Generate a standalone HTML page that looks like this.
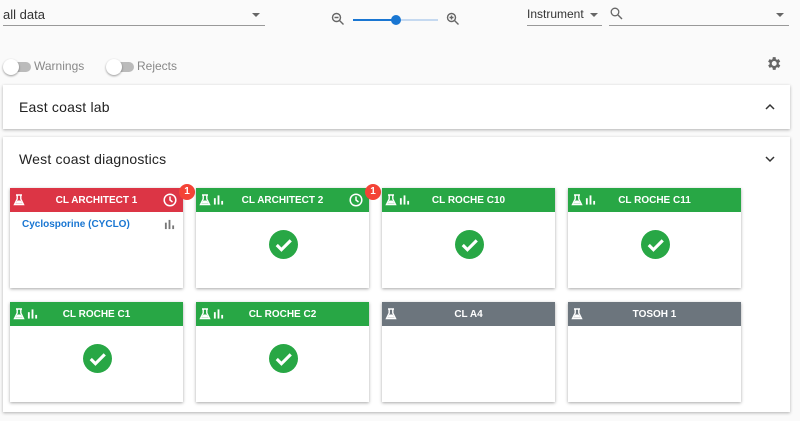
<!DOCTYPE html>
<html><head><style>
*{box-sizing:border-box;margin:0;padding:0}
body{width:800px;height:421px;background:#fafafa;font-family:"Liberation Sans",sans-serif;position:relative;overflow:hidden;color:#333}
.abs{position:absolute}
.sel{border-bottom:1px solid #999;font-size:12px;color:#333;padding-top:2px}
.tri{position:absolute;width:0;height:0;border-left:4px solid transparent;border-right:4px solid transparent;border-top:4px solid #666}
.panel{position:absolute;left:3px;width:787px;background:#fff;box-shadow:0 1px 3px rgba(0,0,0,.3)}
.panel h2{position:absolute;left:16px;font-weight:normal;font-size:14px;color:#222;letter-spacing:.2px}
.card{position:absolute;width:173px;height:100px;background:#fff;box-shadow:0 1px 3px rgba(0,0,0,.35)}
.hd{height:24px;color:#fff;font-weight:bold;font-size:10px;text-align:center;line-height:25px;position:relative}
.red{background:#dc3545}.grn{background:#28a745}.gry{background:#6c757d}
.hd svg{position:absolute;top:6px}
.chk{position:absolute;left:73px;top:42px}
.badge{position:absolute;width:16px;height:16px;border-radius:8px;background:#f44336;color:#fff;font-size:10px;font-weight:bold;text-align:center;line-height:16px}
.tog{position:absolute;width:24px;height:10px;border-radius:5px;background:#bbb}
.tog i{position:absolute;left:-4px;top:-3px;width:16px;height:16px;border-radius:8px;background:#fff;box-shadow:0 1px 2px rgba(0,0,0,.4)}
</style></head><body>
<svg width="0" height="0" style="position:absolute"><defs>
<symbol id="fl" viewBox="0 0 12 12"><path d="M3 1h6M4.2 1v4L1.5 10.5h9L7.8 5V1" fill="none" stroke="#fff" stroke-width="1.4"/><path d="M2.5 9.5l2-3h3l2 3z" fill="#fff"/></symbol>
<symbol id="bar" viewBox="0 0 12 12"><rect x="1" y="4" width="2" height="7" fill="currentColor"/><rect x="5" y="1" width="2" height="10" fill="currentColor"/><rect x="9" y="7" width="2" height="4" fill="currentColor"/></symbol>
<symbol id="clk" viewBox="0 0 14 14"><circle cx="7" cy="7" r="5.8" fill="none" stroke="#fff" stroke-width="1.5"/><path d="M7 3.5V7l2.5 2" fill="none" stroke="#fff" stroke-width="1.5"/></symbol>
<symbol id="ck" viewBox="0 0 28 28"><circle cx="14" cy="14" r="14" fill="#28a745"/><path d="M7.5 14.5l4.5 4.5 9-9" fill="none" stroke="#fff" stroke-width="3"/></symbol>
</defs></svg>

<div class="abs sel" style="left:3px;top:5px;width:262px;height:21px;font-size:13px">all data</div><div class="tri" style="left:252px;top:13px"></div>
<svg class="abs" style="left:331px;top:12px" width="14" height="14" viewBox="0 0 14 14"><circle cx="5.5" cy="5.5" r="4" fill="none" stroke="#666" stroke-width="1.4"/><path d="M8.5 8.5l4 4M3.5 5.5h4" stroke="#666" stroke-width="1.4"/></svg>
<div class="abs" style="left:353px;top:19px;width:85px;height:2px;background:#c5d9f0"></div>
<div class="abs" style="left:353px;top:19px;width:43px;height:2px;background:#1976d2"></div>
<div class="abs" style="left:391px;top:15px;width:10px;height:10px;border-radius:5px;background:#1976d2"></div>
<svg class="abs" style="left:446px;top:12px" width="14" height="14" viewBox="0 0 14 14"><circle cx="5.5" cy="5.5" r="4" fill="none" stroke="#666" stroke-width="1.4"/><path d="M8.5 8.5l4 4M3.5 5.5h4M5.5 3.5v4" stroke="#666" stroke-width="1.4"/></svg>
<div class="abs sel" style="left:527px;top:5px;width:75px;height:21px">Instrument</div><div class="tri" style="left:590px;top:13px"></div>
<div class="abs sel" style="left:609px;top:5px;width:180px;height:21px"></div>
<svg class="abs" style="left:610px;top:7px" width="13" height="13" viewBox="0 0 13 13"><circle cx="5" cy="5" r="3.8" fill="none" stroke="#666" stroke-width="1.3"/><path d="M8 8l4 4" stroke="#666" stroke-width="1.4"/></svg>
<div class="tri" style="left:776px;top:13px"></div>

<div class="tog" style="left:7px;top:62px"><i></i></div><div class="abs" style="left:34px;top:59px;font-size:12px;color:#888">Warnings</div>
<div class="tog" style="left:110px;top:62px"><i></i></div><div class="abs" style="left:137px;top:59px;font-size:12px;color:#888">Rejects</div>
<svg class="abs" style="left:765px;top:55px" width="17" height="17" viewBox="0 0 24 24"><path fill="#666" d="M19.4 13a7.5 7.5 0 000-2l2.1-1.6-2-3.5-2.5 1a7.3 7.3 0 00-1.7-1L15 3h-4l-.4 2.9a7.3 7.3 0 00-1.7 1l-2.5-1-2 3.5L6.6 11a7.5 7.5 0 000 2l-2.1 1.6 2 3.5 2.5-1a7.3 7.3 0 001.7 1L11 21h4l.4-2.9a7.3 7.3 0 001.7-1l2.5 1 2-3.5zM13 15.5a3.5 3.5 0 110-7 3.5 3.5 0 010 7z"/></svg>

<div class="panel" style="top:85px;height:44px"><h2 style="top:14px">East coast lab</h2>
<svg class="abs" style="left:762px;top:18px" width="10" height="7"><path d="M1 6l4-4 4 4" fill="none" stroke="#333" stroke-width="1.5"/></svg></div>
<div class="panel" style="top:137px;height:275px"><h2 style="top:14px">West coast diagnostics</h2>
<svg class="abs" style="left:762px;top:19px" width="10" height="7"><path d="M1 1l4 4 4-4" fill="none" stroke="#333" stroke-width="1.5"/></svg></div>

<div class="card" style="left:10px;top:188px"><div class="hd red"><svg style="left:3px" width="12" height="12"><use href="#fl"/></svg>CL ARCHITECT 1<svg style="left:153px;top:5px" width="14" height="14"><use href="#clk"/></svg></div>
<div class="abs" style="left:12px;top:31px;font-size:10px;font-weight:bold;color:#1976d2">Cyclosporine (CYCLO)</div>
<svg class="abs" style="left:154px;top:31px;color:#777" width="11" height="11"><use href="#bar"/></svg></div>
<div class="badge" style="left:179px;top:184px">1</div>

<div class="card" style="left:196px;top:188px"><div class="hd grn"><svg style="left:3px" width="12" height="12"><use href="#fl"/></svg><svg style="left:17px;color:#fff" width="11" height="12"><use href="#bar"/></svg>CL ARCHITECT 2<svg style="left:153px;top:5px" width="14" height="14"><use href="#clk"/></svg></div><svg class="chk" width="29" height="29"><use href="#ck"/></svg></div>
<div class="badge" style="left:365px;top:184px">1</div>

<div class="card" style="left:382px;top:188px"><div class="hd grn"><svg style="left:3px" width="12" height="12"><use href="#fl"/></svg><svg style="left:17px;color:#fff" width="11" height="12"><use href="#bar"/></svg>CL ROCHE C10</div><svg class="chk" width="29" height="29"><use href="#ck"/></svg></div>
<div class="card" style="left:568px;top:188px"><div class="hd grn"><svg style="left:3px" width="12" height="12"><use href="#fl"/></svg><svg style="left:17px;color:#fff" width="11" height="12"><use href="#bar"/></svg>CL ROCHE C11</div><svg class="chk" width="29" height="29"><use href="#ck"/></svg></div>

<div class="card" style="left:10px;top:302px"><div class="hd grn"><svg style="left:3px" width="12" height="12"><use href="#fl"/></svg><svg style="left:17px;color:#fff" width="11" height="12"><use href="#bar"/></svg>CL ROCHE C1</div><svg class="chk" width="29" height="29"><use href="#ck"/></svg></div>
<div class="card" style="left:196px;top:302px"><div class="hd grn"><svg style="left:3px" width="12" height="12"><use href="#fl"/></svg><svg style="left:17px;color:#fff" width="11" height="12"><use href="#bar"/></svg>CL ROCHE C2</div><svg class="chk" width="29" height="29"><use href="#ck"/></svg></div>
<div class="card" style="left:382px;top:302px"><div class="hd gry"><svg style="left:3px" width="12" height="12"><use href="#fl"/></svg>CL A4</div></div>
<div class="card" style="left:568px;top:302px"><div class="hd gry"><svg style="left:3px" width="12" height="12"><use href="#fl"/></svg>TOSOH 1</div></div>
</body></html>
